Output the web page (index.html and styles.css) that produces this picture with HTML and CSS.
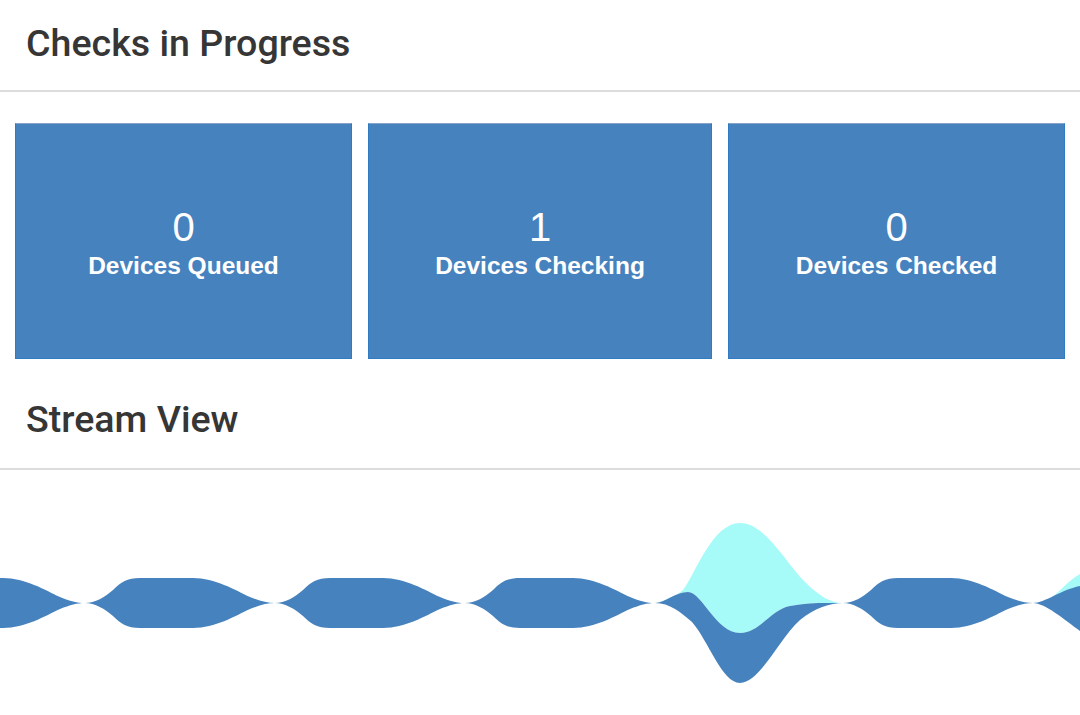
FILE: index.html
```html
<!DOCTYPE html>
<html lang="en">
<head>
<meta charset="utf-8">
<title>Checks in Progress</title>
<link rel="stylesheet" href="styles.css">
</head>
<body>
  <header class="section-head section-head--first">
    <h2 class="section-title">Checks in Progress</h2>
  </header>

  <section class="stats">
    <div class="stat-card stat-card--a">
      <div class="stat-value">0</div>
      <div class="stat-label">Devices Queued</div>
    </div>
    <div class="stat-card stat-card--b">
      <div class="stat-value">1</div>
      <div class="stat-label">Devices Checking</div>
    </div>
    <div class="stat-card stat-card--c">
      <div class="stat-value">0</div>
      <div class="stat-label">Devices Checked</div>
    </div>
  </section>

  <header class="section-head section-head--second">
    <h2 class="section-title">Stream View</h2>
  </header>

  <section class="stream">
    <svg class="stream-svg" viewBox="0 470 1080 245" width="1080" height="245" aria-label="Stream view chart">
      <defs>
        <path id="lobe" d="M0,603 C10,603 20,597 28,590 C36,582 42,578 55,578 L108,578 C130,578 150,590 165,597 C175,601 182,603 190,603 C182,603 175,605 165,609 C150,616 130,628 108,628 L55,628 C42,628 36,624 28,616 C20,609 10,603 0,603 Z"/>
      </defs>
      <g class="layer-light">
        <path d="M655,603 C665,603 675,596 683,590 C695,575 712,523 740,523 C765,523 785,562 805,582 C818,595 830,603 843,603 C828,603 810,602 790,606 C770,610 760,633 740,633 C716,633 702,592 688,592 C675,592 665,603 655,603 Z"/>
        <path d="M1046,603 C1058,593 1068,581 1080,574 L1080,603 Z"/>
      </g>
      <g class="layer-dark">
        <use href="#lobe" x="-105"/>
        <use href="#lobe" x="85"/>
        <use href="#lobe" x="275"/>
        <use href="#lobe" x="465"/>
        <use href="#lobe" x="843"/>
        <path d="M655,603 C665,603 675,592 688,592 C702,592 716,633 740,633 C760,633 770,610 790,606 C810,602 828,603 843,603 C830,603 815,608 800,620 C778,640 760,683 740,683 C722,683 708,640 692,622 C680,612 670,603 655,603 Z"/>
        <path d="M1033,603 C1045,603 1060,590 1080,586 L1080,631 C1065,620 1045,603 1033,603 Z"/>
      </g>
    </svg>
  </section>
</body>
</html>
```

FILE: styles.css
```css
html, body {
  margin: 0;
  padding: 0;
  background: #ffffff;
}

body {
  width: 1080px;
  height: 715px;
  overflow: hidden;
  font-family: Roboto, "Liberation Sans", sans-serif;
}

.section-head {
  border-bottom: 2px solid #dcdcdc;
  padding-left: 26px;
}

.section-head--first {
  padding-top: 20px;
  padding-bottom: 24px;
}

.section-head--second {
  padding-top: 37px;
  padding-bottom: 26px;
}

.section-title {
  margin: 0;
  font-family: Roboto, "Liberation Sans", sans-serif;
  font-weight: 500;
  font-size: 37.6px;
  line-height: 46px;
  color: #363636;
}

.stats {
  display: grid;
  grid-template-columns: 337fr 344fr 337fr;
  gap: 16px;
  padding: 31px 15px 0 15px;
}

.stat-card {
  height: 236px;
  box-sizing: border-box;
  padding-top: 4px;
  background: #4682be;
  border: 1px solid #2f7cc2;
  border-top-color: #8aa3c8;
  display: flex;
  flex-direction: column;
  align-items: center;
  justify-content: center;
  color: #ffffff;
  font-family: "Liberation Sans", Arial, sans-serif;
}

.stat-value {
  font-size: 40px;
  line-height: 44px;
}

.stat-label {
  margin-top: 2px;
  font-size: 24.5px;
  font-weight: bold;
  line-height: 30px;
}

.stream {
  display: block;
}

.stream-svg {
  display: block;
}

.layer-light {
  fill: #a6faf8;
}

.layer-dark {
  fill: #4682be;
}
```
